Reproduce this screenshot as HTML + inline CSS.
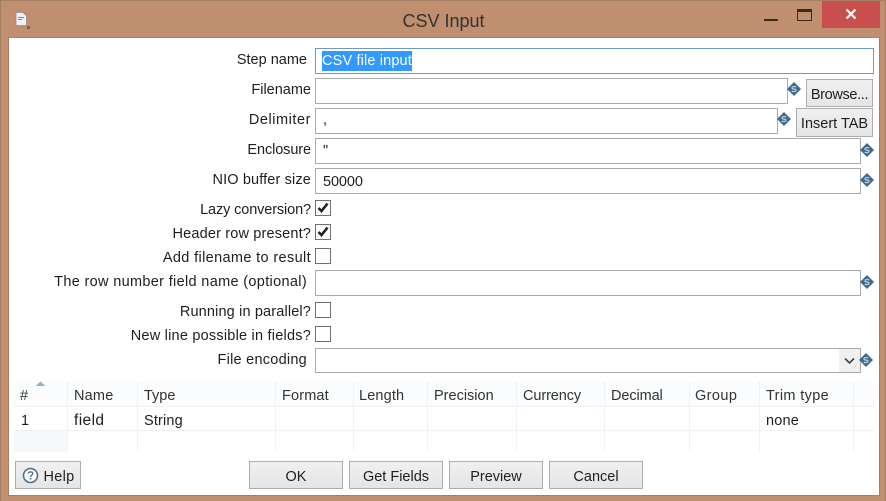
<!DOCTYPE html>
<html><head><meta charset="utf-8"><style>
html,body{margin:0;padding:0;width:886px;height:501px;overflow:hidden;background:#bf8f6f}
*{box-sizing:border-box}
body{font-family:"Liberation Sans",sans-serif;font-size:14.5px;color:#1e1e1e;position:relative}
.a{position:absolute}
.l{position:absolute;right:575px;white-space:nowrap;line-height:18px;height:18px}
.i{position:absolute;background:#fff;border:1px solid #ababab;font-size:14.5px;line-height:24px;padding-left:7px}
.c{position:absolute;left:315px;width:16px;height:16px;background:#fff;border:1px solid #707070}
.c svg{position:absolute;left:0;top:0}
.b{position:absolute;border:1px solid #adadad;background:linear-gradient(#f0f0f0,#e5e5e5);text-align:center;line-height:30px;white-space:nowrap}
.s{position:absolute;width:14px;height:14px}
.h{position:absolute;top:388px;line-height:16px;white-space:nowrap;color:#333}
.t{position:absolute;top:413px;line-height:16px;white-space:nowrap}
.v{position:absolute;width:1px;top:381px;height:71px;background:#f0f2f5}
</style></head><body>
<svg width="0" height="0" style="position:absolute"><defs><g id="d"><path d="M7 0L14 7L7 14L0 7Z" fill="#3f6a8e"/><path d="M9.2 5.1C8 4.1 5 4.3 5 6C5 7.8 9 6.4 9 8.1C9 9.8 5.9 10 4.8 9" fill="none" stroke="#c3d0dc" stroke-width="1.2"/></g></defs></svg>

<div class="a" style="left:0;top:0;width:886px;height:501px;border:1px solid #a37f66;border-bottom:none"></div>
<svg class="a" style="left:15px;top:12px" width="16" height="18" viewBox="0 0 16 18"><path d="M1 .5H8L11.5 4V13.5H1Z" fill="#eef1f3" stroke="#8f8f8f" stroke-width=".8"/><path d="M3 5.5H9M3 7.5H7" stroke="#7a8c9c" stroke-width="1"/><rect x="12" y="14" width="3" height="3" fill="#6d6358"/></svg>
<div class="a" style="left:0;width:887px;top:11px;text-align:center;font-size:18px;line-height:20px;color:#333">CSV Input</div>
<div class="a" style="left:764px;top:19px;width:14px;height:2px;background:#3b2a1e"></div>
<div class="a" style="left:797px;top:9px;width:15px;height:12px;border:1px solid #3b2a1e;border-top:3px solid #3b2a1e"></div>
<div class="a" style="left:822px;top:1px;width:58px;height:27px;background:#c94f4f"></div>
<svg class="a" style="left:845px;top:8px" width="12" height="12" viewBox="0 0 12 12"><path d="M1.5 1.5L10.5 10.5M10.5 1.5L1.5 10.5" stroke="#fff" stroke-width="2.2"/></svg>

<div class="a" style="left:9px;top:38px;width:870px;height:457px;background:#fff;box-shadow:0 0 0 1px #a37f66"></div>

<div class="l" style="top:51px;right:579px">Step name</div>
<div class="l" style="top:81px">Filename</div>
<div class="l" style="top:111px;letter-spacing:.55px">Delimiter</div>
<div class="l" style="top:141px;letter-spacing:-.1px">Enclosure</div>
<div class="l" style="top:171px;letter-spacing:.14px">NIO buffer size</div>
<div class="l" style="top:201px;letter-spacing:-.12px">Lazy conversion?</div>
<div class="l" style="top:225px;letter-spacing:.16px">Header row present?</div>
<div class="l" style="top:249px;letter-spacing:.36px">Add filename to result</div>
<div class="l" style="top:273px;right:579px;letter-spacing:.33px">The row number field name (optional)</div>
<div class="l" style="top:303px;letter-spacing:.15px">Running in parallel?</div>
<div class="l" style="top:327px;letter-spacing:.22px">New line possible in fields?</div>
<div class="l" style="top:351px;right:579px;letter-spacing:.25px">File encoding</div>

<div class="i" style="left:315px;top:48px;width:559px;height:26px;border-color:#6a9cc4;padding-left:6px"><span style="background:#3399ff;color:#fff;display:inline-block;line-height:20px;margin-top:2px;vertical-align:top;letter-spacing:.15px">CSV file input</span></div>
<div class="i" style="left:315px;top:78px;width:473px;height:26px"></div>
<div class="i" style="left:315px;top:108px;width:463px;height:26px;line-height:22px">,</div>
<div class="i" style="left:315px;top:138px;width:546px;height:26px">"</div>
<div class="i" style="left:315px;top:168px;width:546px;height:26px;line-height:26px;letter-spacing:-.1px">50000</div>
<div class="i" style="left:315px;top:270px;width:546px;height:26px"></div>
<div class="i" style="left:315px;top:348px;width:546px;height:25px"></div>
<div class="a" style="left:839px;top:349px;width:21px;height:23px;background:#f0f0f0"></div>
<svg class="a" style="left:844px;top:357px" width="11" height="8" viewBox="0 0 11 8"><path d="M1 1.5L5.5 6L10 1.5" fill="none" stroke="#444" stroke-width="1.6"/></svg>

<svg class="s" style="left:787px;top:82px"><use href="#d"/></svg>
<svg class="s" style="left:777px;top:112px"><use href="#d"/></svg>
<svg class="s" style="left:860px;top:143px"><use href="#d"/></svg>
<svg class="s" style="left:860px;top:173px"><use href="#d"/></svg>
<svg class="s" style="left:860px;top:275px"><use href="#d"/></svg>
<svg class="s" style="left:859px;top:353px"><use href="#d"/></svg>

<div class="b" style="left:806px;top:79px;width:67px;height:28px;letter-spacing:-.35px">Browse...</div>
<div class="b" style="left:796px;top:108px;width:77px;height:29px">Insert TAB</div>

<div class="c" style="top:200px"><svg width="14" height="14" viewBox="0 0 14 14"><path d="M2.5 7L5.5 10L11.5 2.5" fill="none" stroke="#222" stroke-width="2.6"/></svg></div>
<div class="c" style="top:224px"><svg width="14" height="14" viewBox="0 0 14 14"><path d="M2.5 7L5.5 10L11.5 2.5" fill="none" stroke="#222" stroke-width="2.6"/></svg></div>
<div class="c" style="top:248px"></div>
<div class="c" style="top:302px"></div>
<div class="c" style="top:326px"></div>

<div class="a" style="left:14px;top:381px;width:860px;height:25px;background:#fbfcfd"></div>
<div class="a" style="left:14px;top:431px;width:53px;height:21px;background:#f7f8f9"></div>
<div class="a" style="left:14px;top:406px;width:860px;height:1px;background:#eef1f5"></div>
<div class="a" style="left:14px;top:430px;width:860px;height:1px;background:#eef1f5"></div>
<div class="v" style="left:67px"></div><div class="v" style="left:137px"></div><div class="v" style="left:275px"></div><div class="v" style="left:353px"></div><div class="v" style="left:427px"></div><div class="v" style="left:516px"></div><div class="v" style="left:604px"></div><div class="v" style="left:689px"></div><div class="v" style="left:759px"></div><div class="v" style="left:853px"></div>
<svg class="a" style="left:35px;top:381px" width="11" height="6"><path d="M0.5 5L5.5 0.5L10.5 5Z" fill="#8fb4cc"/></svg>

<div class="h" style="left:20px">#</div><div class="h" style="left:74px;letter-spacing:.2px">Name</div><div class="h" style="left:144px">Type</div><div class="h" style="left:282px;letter-spacing:.15px">Format</div><div class="h" style="left:359px;letter-spacing:.15px">Length</div><div class="h" style="left:434px">Precision</div><div class="h" style="left:523px;letter-spacing:-.1px">Currency</div><div class="h" style="left:611px;letter-spacing:-.1px">Decimal</div><div class="h" style="left:695px;letter-spacing:.4px">Group</div><div class="h" style="left:766px;letter-spacing:.35px">Trim type</div>
<div class="t" style="left:21px">1</div><div class="t" style="left:74px;font-size:15.5px;letter-spacing:.4px">field</div><div class="t" style="left:144px;letter-spacing:.15px">String</div><div class="t" style="left:766px;letter-spacing:.2px">none</div>

<div class="b" style="left:15px;top:461px;width:66px;height:28px;padding-left:22px;letter-spacing:.3px">Help</div>
<svg class="a" style="left:22px;top:467px" width="17" height="17" viewBox="0 0 17 17"><circle cx="8.5" cy="8.5" r="7" fill="#fff" stroke="#4f6f8a" stroke-width="1.6"/><path d="M6.2 6.6C6.2 4.4 10.8 4.4 10.8 6.6C10.8 8.2 8.5 8 8.5 10" fill="none" stroke="#4f6f8a" stroke-width="1.4"/><rect x="7.7" y="11" width="1.6" height="1.6" fill="#4f6f8a"/></svg>
<div class="b" style="left:249px;top:461px;width:94px;height:28px">OK</div>
<div class="b" style="left:349px;top:461px;width:94px;height:28px">Get Fields</div>
<div class="b" style="left:449px;top:461px;width:94px;height:28px">Preview</div>
<div class="b" style="left:549px;top:461px;width:94px;height:28px">Cancel</div>
</body></html>
